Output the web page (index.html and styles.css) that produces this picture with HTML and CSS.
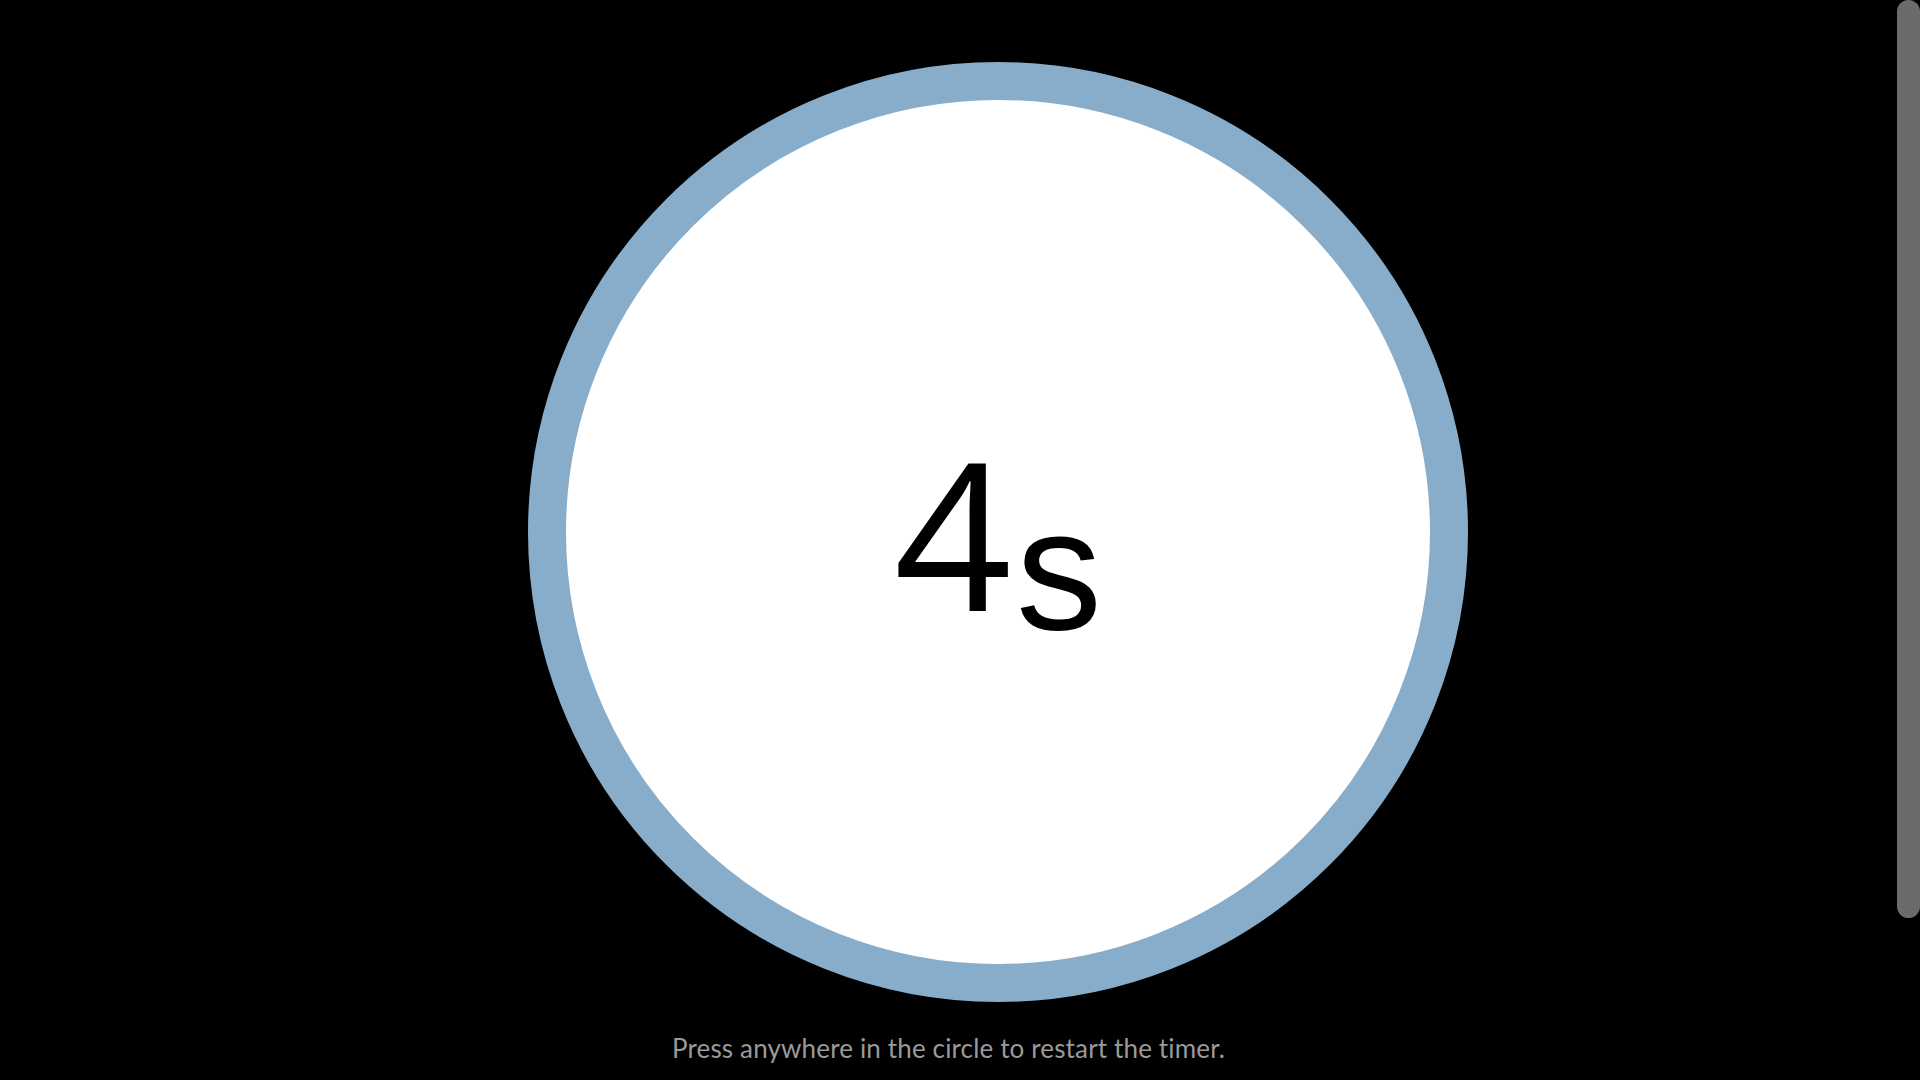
FILE: index.html
```html
<!DOCTYPE html>
<html lang="en">
<head>
<meta charset="utf-8">
<title>Timer</title>
<link rel="stylesheet" href="styles.css">
</head>
<body>
<div class="frame">
  <main class="page">
    <div class="stage">
      <div class="circle">
        <div class="count"><span class="num">4</span><span class="unit">s</span></div>
      </div>
    </div>
    <p class="hint">Press anywhere in the circle to restart the timer.</p>
  </main>
  <div class="scrollbar"><div class="thumb"></div></div>
</div>
</body>
</html>
```
FILE: styles.css
```css
html, body {
  margin: 0;
  background: #000;
  overflow: hidden;
}
body {
  font-family: "Lato", "Liberation Sans", sans-serif;
}
.frame {
  display: flex;
  height: 1080px;
}
.page {
  flex: 1;
  display: flex;
  flex-direction: column;
}
.scrollbar {
  width: 23px;
  background: #000;
}
.thumb {
  height: 918px;
  background: #6b6b6b;
  border-radius: 12px;
}
.stage {
  display: flex;
  justify-content: center;
  padding-top: 62px;
  padding-left: 99px;
}
.circle {
  width: 940px;
  height: 940px;
  box-sizing: border-box;
  border: 38px solid #88adca;
  border-radius: 50%;
  background: #fff;
  display: flex;
  align-items: center;
  justify-content: center;
}
.count {
  display: flex;
  align-items: flex-start;
  height: 260px;
  color: #000;
  line-height: 1;
}
.num {
  font-family: "Open Sans", sans-serif;
  font-size: 206px;
  font-weight: 400;
  margin-top: 26px;
}
.unit {
  font-family: "Liberation Sans", sans-serif;
  font-size: 172px;
  font-weight: 400;
  margin-top: 81px;
  margin-left: 4px;
}
.hint {
  margin: 31px 0 0;
  text-align: center;
  color: #9a9a9a;
  font-size: 26px;
  letter-spacing: 0.15px;
  line-height: 1.2;
  font-family: "Lato", sans-serif;
}
```
